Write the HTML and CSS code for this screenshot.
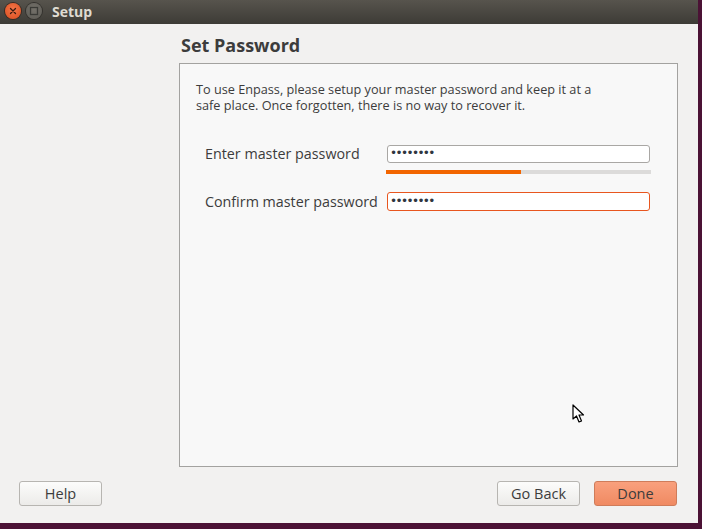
FILE: index.html
```html
<!DOCTYPE html>
<html>
<head>
<meta charset="utf-8">
<link rel="stylesheet" href="styles.css">
</head>
<body>
<div class="window">
  <div class="titlebar">
    <span class="tb-btn close">
      <svg width="16" height="16" viewBox="0 0 16 16"><path d="M5.5 5.5 L10.5 10.5 M10.5 5.5 L5.5 10.5" stroke="#3a1a10" stroke-width="1.3" stroke-linecap="round"/></svg>
    </span>
    <span class="tb-btn mini">
      <svg width="16" height="16" viewBox="0 0 16 16"><rect x="4.5" y="4.5" width="7" height="7" fill="none" stroke="#3a3a36" stroke-width="1.3"/></svg>
    </span>
    <span class="tb-title">Setup</span>
  </div>
  <div class="content">
    <div class="main">
      <div class="sidebar"></div>
      <div class="page">
        <h1 class="page-title">Set Password</h1>
        <div class="panel">
          <p class="desc">To use Enpass, please setup your master password and keep it at a safe place. Once forgotten, there is no way to recover it.</p>
          <div class="form">
            <div class="row">
              <label class="lbl">Enter master password</label>
              <div class="field">
                <div class="input">••••••••</div>
              </div>
            </div>
            <div class="meter"><div class="meter-fill" style="width:51%"></div></div>
            <div class="row row2">
              <label class="lbl">Confirm master password</label>
              <div class="field">
                <div class="input focus">••••••••</div>
              </div>
            </div>
          </div>
        </div>
      </div>
    </div>
    <div class="footer">
      <button class="btn">Help</button>
      <div class="spacer"></div>
      <button class="btn">Go Back</button>
      <button class="btn primary">Done</button>
    </div>
  </div>
  <svg class="cursor" width="14" height="20" viewBox="0 0 14 20"><path d="M1 1 L1 15 L4.5 12 L7 18 L9.5 17 L7 11 L11.5 11 Z" fill="#fff" stroke="#000" stroke-width="1.2" stroke-linejoin="round"/></svg>
</div>
</body>
</html>
```
FILE: styles.css
```css
html, body {
  margin: 0;
  padding: 0;
}
body {
  background: #4b1235;
  width: 702px;
  height: 529px;
  overflow: hidden;
  font-family: "Open Sans", "DejaVu Sans", sans-serif;
}
.window {
  position: relative;
  width: 698px;
  height: 523px;
  background: #f2f1f0;
  display: flex;
  flex-direction: column;
}
.titlebar {
  height: 24px;
  flex-shrink: 0;
  background: linear-gradient(#57544d, #3d3b36);
  display: flex;
  align-items: center;
  padding-left: 5px;
  gap: 3px;
}
.tb-btn {
  width: 16px;
  height: 16px;
  border-radius: 50%;
  display: inline-flex;
  margin-top: -2px;
}
.tb-btn.close {
  background: radial-gradient(circle at 50% 40%, #f2774a, #dc4b1c);
  box-shadow: 0 0 0 1px #3a2a22;
}
.tb-btn.mini {
  background: radial-gradient(circle at 50% 40%, #74716a, #5c5a54);
  box-shadow: 0 0 0 1px #33312d;
  margin-left: 2px;
}
.tb-title {
  color: #dfdbd2;
  font-weight: bold;
  font-size: 14px;
  margin-left: 7px;
  margin-top: -2px;
}
.content {
  flex: 1;
  min-height: 0;
  display: flex;
  flex-direction: column;
}
.main {
  flex: 1;
  display: flex;
}
.sidebar {
  width: 179px;
}
.page {
  width: 499px;
  display: flex;
  flex-direction: column;
}
.page-title {
  margin: 11px 0 0 2px;
  font-size: 18px;
  font-weight: bold;
  color: #3c3c3c;
  height: 28px;
  line-height: 20px;
}
.panel {
  height: 404px;
  border: 1px solid #a3a2a0;
  background: #f8f8f8;
  box-sizing: border-box;
  padding: 17px 0 0 16px;
}
.desc {
  margin: 0;
  font-size: 12.7px;
  line-height: 16px;
  color: #3c3c3c;
  width: 420px;
}
.form {
  margin-top: 31px;
  padding-left: 9px;
  width: 445px;
}
.row {
  display: flex;
  align-items: center;
  height: 19px;
}
.lbl {
  font-size: 14.3px;
  color: #3c3c3c;
  width: 182px;
  flex-shrink: 0;
  white-space: nowrap;
}
.field {
  flex: 1;
}
.input {
  height: 18px;
  box-sizing: border-box;
  border: 1px solid #a9a7a4;
  border-radius: 3px;
  background: #fff;
  font-family: "DejaVu Sans", sans-serif;
  font-size: 12px;
  line-height: 15px;
  padding-left: 2px;
  color: #2f3640;
  letter-spacing: -1.6px;
}
.input.focus {
  height: 19px;
  line-height: 16px;
  border-color: #e8561f;
}
.meter {
  margin: 7px 0 0 181px;
  height: 4px;
  background: #dcdbda;
  width: 265px;
}
.meter-fill {
  height: 4px;
  background: #f26500;
}
.row2 {
  margin-top: 18px;
}
.footer {
  height: 56px;
  flex-shrink: 0;
  display: flex;
  align-items: flex-start;
  padding: 14px 21px 0 19px;
  gap: 14px;
  box-sizing: border-box;
}
.spacer {
  flex: 1;
}
.btn {
  width: 83px;
  height: 25px;
  border: 1px solid #b7b5b1;
  border-radius: 3px;
  background: linear-gradient(#fcfcfb, #ecebe9);
  font-family: "Open Sans", "DejaVu Sans", sans-serif;
  font-size: 14.5px;
  color: #3c3c3c;
  padding: 0;
}
.btn.primary {
  background: linear-gradient(#f9a07d, #f08a62);
  border-color: #cf7c5a;
}
.cursor {
  position: absolute;
  left: 572px;
  top: 404px;
}
```
